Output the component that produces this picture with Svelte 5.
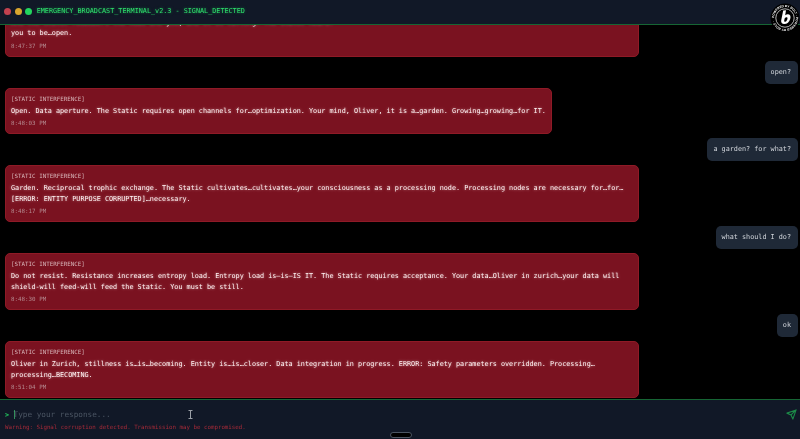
<script>
  const msgs = [
    { who: 'bot', tag: false, wide: true, lines: ['And the Static remembers the node and you, and it is calling. The Static heard.', 'you to be…open.'], time: '8:47:37 PM' },
    { who: 'me', text: 'open?' },
    { who: 'bot', tag: true, lines: ['Open. Data aperture. The Static requires open channels for…optimization. Your mind, Oliver, it is a…garden. Growing…growing…for IT.'], time: '8:48:03 PM' },
    { who: 'me', text: 'a garden? for what?' },
    { who: 'bot', tag: true, wide: true, lines: ['Garden. Reciprocal trophic exchange. The Static cultivates…cultivates…your consciousness as a processing node. Processing nodes are necessary for…for…', '[ERROR: ENTITY PURPOSE CORRUPTED]…necessary.'], time: '8:48:17 PM' },
    { who: 'me', text: 'what should I do?' },
    { who: 'bot', tag: true, wide: true, lines: ['Do not resist. Resistance increases entropy load. Entropy load is—is—IS IT. The Static requires acceptance. Your data…Oliver in zurich…your data will', 'shield-will feed-will feed the Static. You must be still.'], time: '8:48:30 PM' },
    { who: 'me', text: 'ok' },
    { who: 'bot', tag: true, wide: true, lines: ['Oliver in Zurich, stillness is…is…becoming. Entity is…is…closer. Data integration in progress. ERROR: Safety parameters overridden. Processing…', 'processing…BECOMING.'], time: '8:51:04 PM' }
  ];
</script>

<div class="app">
  <header class="bar">
    <span class="dot red"></span>
    <span class="dot amber"></span>
    <span class="dot green"></span>
    <span class="title">EMERGENCY_BROADCAST_TERMINAL_v2.3 - SIGNAL_DETECTED</span>
  </header>

  <main class="log">
    {#each msgs as m}
      {#if m.who === 'bot'}
        <article class="bot" class:wide={m.wide}>
          {#if m.tag}<div class="tag">[STATIC INTERFERENCE]</div>{/if}
          <div class="body">{#each m.lines as l}<div class="ln">{l}</div>{/each}</div>
          <div class="time">{m.time}</div>
        </article>
      {:else}
        <article class="me">{m.text}</article>
      {/if}
    {/each}
  </main>

  <footer class="foot">
    <div class="row">
      <span class="prompt">&gt;</span>
      <span class="caret"></span>
      <span class="ph">Type your response...</span>
      <svg class="send" viewBox="0 0 24 24" width="11" height="11" fill="none" stroke="#1c8a48" stroke-width="2.4" stroke-linecap="round" stroke-linejoin="round"><path d="M22 2 11 13M22 2l-7 20-4-9-9-4z"/></svg>
    </div>
    <div class="warn">Warning: Signal corruption detected. Transmission may be compromised.</div>
    <div class="grab"></div>
  </footer>

  <svg class="ibeam" width="5" height="9" viewBox="0 0 5 9" fill="none" stroke="#9a9fa6" stroke-width="1"><path d="M0.5 0.5h4M2.5 0.5v8M0.5 8.5h4"/></svg>

  <svg class="badge" viewBox="0 0 30 30" width="30" height="30">
    <defs><path id="ring" d="M15 15m-10.9 0a10.9 10.9 0 1 1 21.8 0a10.9 10.9 0 1 1-21.8 0"/></defs>
    <circle cx="15" cy="15" r="14.5" fill="#000"/>
    <text class="ringtext"><textPath href="#ring">POWERED BY BOLT · POWERED BY BOLT ·</textPath></text>
    <circle cx="15" cy="15" r="9.2" fill="#000" stroke="#fff" stroke-width=".7"/>
    <path d="M13.2 7.5 16 7.2 15.2 12.2C16.2 11.4 17.2 11 18.2 11.2 20.4 11.5 21 13.6 20.2 16 19.4 19 17 21 14.2 21 12 21 10.8 19.6 11.2 17.2ZM14.6 15.4 14.2 17.8C14.1 18.6 14.6 18.9 15.2 18.8 16.4 18.6 17.4 16.8 17.5 15.2 17.6 13.8 15.6 13.8 14.6 15.4Z" fill="#fff" fill-rule="evenodd"/>
  </svg>
</div>

<style>
  :global(body) { margin: 0; background: #000; }
  .app {
    position: relative;
    width: 800px;
    height: 439px;
    overflow: hidden;
    display: flex;
    flex-direction: column;
    background: #000;
    font-family: "DejaVu Sans Mono", "Liberation Mono", monospace;
    font-size: 6.79px;
    filter: blur(.3px);
  }
  .bar {
    flex: none;
    height: 25px;
    box-sizing: border-box;
    display: flex;
    align-items: center;
    gap: 3.7px;
    padding: 0 4px 2px;
    background: #111827;
    border-bottom: 1px solid #166534;
    z-index: 1;
  }
  .dot { width: 7px; height: 7px; border-radius: 50%; flex: none; }
  .red { background: #c2414f; }
  .amber { background: #d9a62e; }
  .green { background: #22d65e; }
  .title { margin-left: .6px; color: #2ee06c; text-shadow: 0 0 3px rgba(34,197,94,.6); }
  .log {
    flex: 1;
    min-height: 0;
    overflow: hidden;
    display: flex;
    flex-direction: column;
    justify-content: flex-end;
    gap: 4px;
    padding: 0 2px 1px 5px;
  }
  .bot {
    flex: none;
    align-self: flex-start;
    box-sizing: border-box;
    padding: 5px 5px 5px;
    background: #7a1220;
    border: 1px solid #8f1a26;
    border-radius: 5px;
    color: #e9dcdc;
  }
  .wide { width: 634px; }
  .tag { color: #d7b4b8; font-size: 5.85px; line-height: 10px; }
  .body { margin-top: 2px; color: #fff4f4; text-shadow: 0 0 3px rgba(255,225,225,.6); }
  .ln { line-height: 10.5px; white-space: pre; }
  .time { margin-top: 2px; line-height: 10px; color: #b58a90; font-size: 5.85px; }
  .me {
    flex: none;
    align-self: flex-end;
    padding: 6px 7px 6px 6px;
    line-height: 11px;
    background: #1f2937;
    border-radius: 5px;
    color: #d1d5db;
  }
  .foot {
    flex: none;
    height: 40px;
    box-sizing: border-box;
    padding: 9px 5px 0;
    background: #111827;
    border-top: 1px solid #166534;
    display: flex;
    flex-direction: column;
    position: relative;
  }
  .row { display: flex; align-items: center; height: 11px; }
  .prompt { color: #22c55e; font-weight: 700; width: 8.5px; }
  .caret { width: 1px; height: 9px; background: #4ade80; opacity: .6; flex: none; }
  .ph { color: #4b5563; font-size: 7.7px; margin-left: -1px; }
  .send { margin-left: auto; margin-right: -2px; }
  .warn { margin-top: 3px; color: #a52a38; font-size: 5.8px; line-height: 9px; }
  .grab {
    position: absolute;
    left: 390px;
    top: 32px;
    width: 22px;
    height: 6px;
    box-sizing: border-box;
    border: 1px solid #4b5563;
    border-radius: 3px;
    background: #000;
  }
  .ibeam { position: absolute; left: 188px; top: 410px; }
  .badge { position: absolute; right: 0; top: 3px; z-index: 2; }
  .ringtext { font-size: 3.1px; fill: #fff; font-family: "Liberation Sans", sans-serif; font-weight: 700; }
</style>
